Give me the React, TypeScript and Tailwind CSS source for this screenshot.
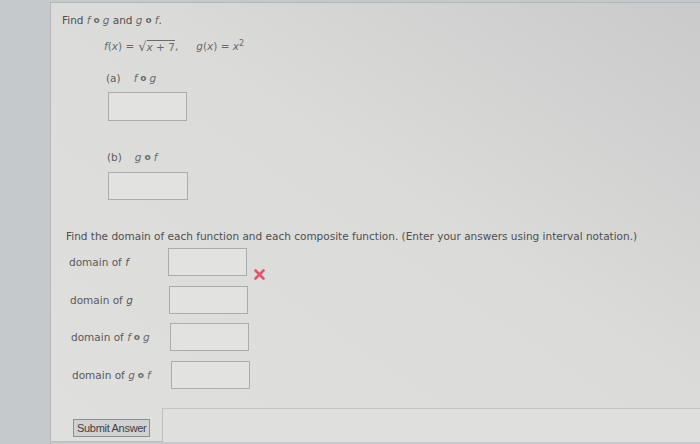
import React from 'react';

const font = { fontFamily: '"DejaVu Sans", Verdana, sans-serif' };

function V({ children }: { children: React.ReactNode }) {
  return <span className="italic">{children}</span>;
}

function Comp({ a, b }: { a: string; b: string }) {
  return (
    <span className="text-[#6b6b6b]">
      <V>{a}</V>
      <span className="mx-[3px] text-[9px] font-bold align-[1px]">o</span>
      <V>{b}</V>
    </span>
  );
}

function Box({ className = '' }: { className?: string }) {
  return <div className={`h-[28px] w-[79px] shrink-0 border border-[#a9adb0] bg-[#e2e2e1] ${className}`} />;
}

function DomainRow({ label, pl, children }: { label: React.ReactNode; pl: string; children?: React.ReactNode }) {
  return (
    <div className={`flex h-[28px] items-center ${pl}`}>
      <div className="w-[99px] text-[#5a5a5a]">{label}</div>
      <Box />
      {children}
    </div>
  );
}

export default function App() {
  return (
    <div className="flex h-[444px] w-[700px] overflow-hidden bg-[#c6c9cb] text-[10.5px] leading-[14px]" style={font}>
      <div className="w-[50px] shrink-0" />
      <div className="mt-[2px] flex flex-1 flex-col border-l border-t border-[#b5b7b8] bg-[linear-gradient(to_bottom_left,#cacaca,#dbdbda_45%,#dfdfde)]">
        <div className="pl-[11px] pt-[10px] text-[#4f4f4f]">
          Find <Comp a="f" b="g" /> and <Comp a="g" b="f" />.
        </div>

        <div className="mt-[12px] flex h-[14px] items-center pl-[53px] text-[#6b6b6b]">
          <span><V>f</V>(<V>x</V>) =</span>
          <span className="ml-[4px] flex items-center">
            <span className="text-[13px] leading-none">√</span>
            <span className="border-t border-[#6b6b6b] leading-[12px]"><V>x</V> + 7</span>
          </span>
          <span>,</span>
          <span className="ml-[18px]"><V>g</V>(<V>x</V>) = <V>x</V><sup className="text-[8px]">2</sup></span>
        </div>

        <div className="mt-[18px] pl-[55px] text-[#5f5f5f]">
          (a)<span className="ml-[13px]"><Comp a="f" b="g" /></span>
        </div>
        <Box className="ml-[57px] mt-[7px] !h-[29px] !w-[79px]" />

        <div className="mt-[29px] pl-[56px] text-[#5f5f5f]">
          (b)<span className="ml-[13px]"><Comp a="g" b="f" /></span>
        </div>
        <Box className="ml-[57px] mt-[8px] !w-[80px]" />

        <div className="mt-[29px] pl-[15px] text-[#4f4f4f]">
          Find the domain of each function and each composite function. (Enter your answers using interval notation.)
        </div>

        <div className="mt-[5px] flex flex-col gap-[9.5px]">
          <DomainRow label={<>domain of <V>f</V></>} pl="pl-[18px]">
            <svg className="relative top-[12px] ml-[7px]" width="11" height="11" viewBox="0 0 11 11">
              <path d="M1.5 1.5 L9.5 9.5 M9.5 1.5 L1.5 9.5" stroke="#e0566e" strokeWidth="2.6" strokeLinecap="round" />
            </svg>
          </DomainRow>
          <DomainRow label={<>domain of <V>g</V></>} pl="pl-[19px]" />
          <DomainRow label={<>domain of <Comp a="f" b="g" /></>} pl="pl-[20px]" />
          <DomainRow label={<>domain of <Comp a="g" b="f" /></>} pl="pl-[21px]" />
        </div>

        <div className="mt-[19px] flex flex-1">
          <div className="w-[112px] border-b border-r border-[#bdbebe] pl-[22px] pt-[11px]">
            <button
              className="h-[18px] border border-[#8e8f90] bg-[#d2d2d2] px-[3px] text-[11px] leading-[16px] tracking-[-0.3px] text-[#3f3f3f]"
              style={{ fontFamily: '"Liberation Sans", Arial, sans-serif' }}
            >
              Submit Answer
            </button>
          </div>
          <div className="flex-1 border-t border-[#c3c4c4] bg-[#dfdfde]" />
        </div>
        <div className="h-[2px] bg-[#c6c9cb]" />
      </div>
    </div>
  );
}
